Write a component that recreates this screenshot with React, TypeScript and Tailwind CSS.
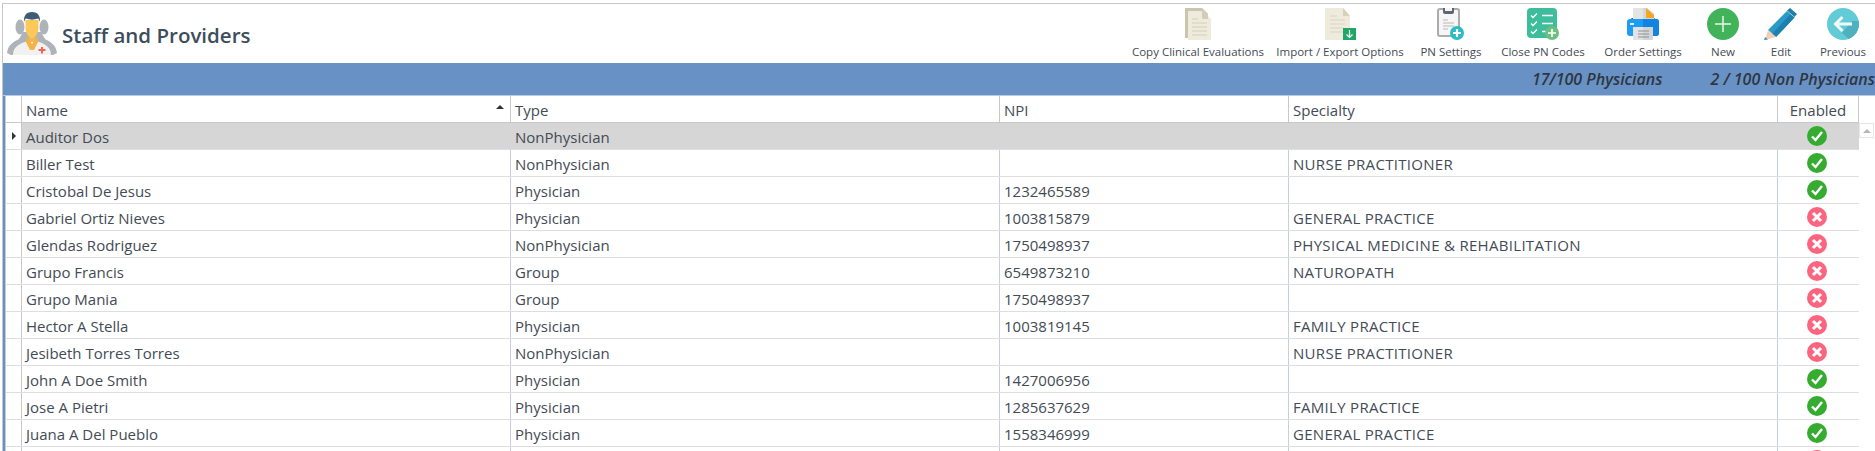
import React from "react";

const rows = [
  { name: "Auditor Dos", type: "NonPhysician", npi: "", specialty: "", enabled: true },
  { name: "Biller Test", type: "NonPhysician", npi: "", specialty: "NURSE PRACTITIONER", enabled: true },
  { name: "Cristobal De Jesus", type: "Physician", npi: "1232465589", specialty: "", enabled: true },
  { name: "Gabriel Ortiz Nieves", type: "Physician", npi: "1003815879", specialty: "GENERAL PRACTICE", enabled: false },
  { name: "Glendas Rodriguez", type: "NonPhysician", npi: "1750498937", specialty: "PHYSICAL MEDICINE & REHABILITATION", enabled: false },
  { name: "Grupo Francis", type: "Group", npi: "6549873210", specialty: "NATUROPATH", enabled: false },
  { name: "Grupo Mania", type: "Group", npi: "1750498937", specialty: "", enabled: false },
  { name: "Hector A Stella", type: "Physician", npi: "1003819145", specialty: "FAMILY PRACTICE", enabled: false },
  { name: "Jesibeth Torres Torres", type: "NonPhysician", npi: "", specialty: "NURSE PRACTITIONER", enabled: false },
  { name: "John A Doe Smith", type: "Physician", npi: "1427006956", specialty: "", enabled: true },
  { name: "Jose A Pietri", type: "Physician", npi: "1285637629", specialty: "FAMILY PRACTICE", enabled: true },
  { name: "Juana A Del Pueblo", type: "Physician", npi: "1558346999", specialty: "GENERAL PRACTICE", enabled: true },
  { name: "", type: "", npi: "", specialty: "", enabled: false },
];

const StaffLogo = () => (
  <svg width="50" height="43" viewBox="0 0 50 43">
    {/* people behind */}
    <ellipse cx="13" cy="15" rx="4.500" ry="7.500" fill="#aeb3ba" />
    <ellipse cx="37" cy="15" rx="4.500" ry="7.500" fill="#aeb3ba" />
    <path d="M0 41c1-8 6-11 12-14l4-7h18l4 7c6 3 11 6 12 14l-4 2H4z" fill="#aeb3ba" />
    {/* coat */}
    <path d="M6 43c0-7 5-11 12-13l4-2h6l4 2c7 2 12 6 12 13z" fill="#f1f1ef" />
    {/* face and neck */}
    <path d="M22 21h6v9h-6z" fill="#f6b84a" />
    <path d="M18.500 8h13v7c0 6-3 11-6.500 11s-6.500-5-6.500-11z" fill="#fdc858" />
    <path d="M25 0c6 0 8.500 4 8 10-.5-1.500-1-3-2-3.500-4 1.500-8 1.500-12 0-1 .5-1.500 2-2 3.500-.5-6 2-10 8-10z" fill="#3f5c75" />
    {/* collar and tie */}
    <path d="M20 25l5 7 5-7 1.500 4-4.500 9h-4l-4.500-9z" fill="#f3b24a" />
    {/* red cross */}
    <path d="M34 35h2v2h2.500v2H36v2.500h-2V39h-2.500v-2H34z" fill="#f0635f" />
  </svg>
);

const CopyDoc = () => (
  <svg width="26" height="32" viewBox="0 0 26 32">
    <path d="M0 0h17l6 6v24H0z" fill="#c9c5ae" />
    <path d="M3 3h15l8 8v21H3z" fill="#eeeadc" />
    <path d="M17 0l6 6v5h-5l-1-1z" fill="#d2cdb8" />
    <path d="M7 11h6M7 15h15M7 19h15M7 23h15M7 27h15" stroke="#d3cfba" strokeWidth="1.200" />
  </svg>
);

const ImportDoc = () => (
  <svg width="31" height="32" viewBox="0 0 31 32">
    <path d="M0 0h18l7 8v24H0z" fill="#eeeadc" />
    <path d="M18 0l7 8h-7z" fill="#d6d1bc" />
    <path d="M5 8h7M5 12h15M5 16h15M5 20h13M5 24h13" stroke="#d9d5c3" strokeWidth="1.200" />
    <rect x="18" y="20" width="13" height="12" fill="#1fa865" />
    <path d="M24.500 22v7.500M21.500 26.500l3 3 3-3" stroke="#fff" strokeWidth="1.200" fill="none" />
  </svg>
);

const Clipboard = () => (
  <svg width="28" height="32" viewBox="0 0 28 32">
    <rect x="1" y="1" width="21" height="27" rx="2" fill="#f6f6f6" stroke="#a9adb0" strokeWidth="2" />
    <path d="M6 0h11v4a2 2 0 0 1-2 2H8a2 2 0 0 1-2-2z" fill="#5b6670" />
    <path d="M8 0h7v3H8z" fill="#f6f6f6" />
    <path d="M6 12h5M6 15h11M6 18h11M6 21h5" stroke="#b4b8bb" strokeWidth="1" />
    <circle cx="20" cy="25" r="7" fill="#2bbcc4" />
    <path d="M20 21v8M16 25h8" stroke="#fff" strokeWidth="2.200" />
  </svg>
);

const Checklist = () => (
  <svg width="32" height="32" viewBox="0 0 32 32">
    <rect x="0" y="0" width="30" height="30" rx="4" fill="#3dbd9c" />
    <path d="M4 7.500l2 2 4-4M4 15.500l2 2 4-4M4 23.500l2 2 4-4" stroke="#fff" strokeWidth="1.300" fill="none" />
    <path d="M15 7.500h11M15 15.500h11M15 23.500h4" stroke="#fff" strokeWidth="1.300" />
    <circle cx="25" cy="25" r="7" fill="#6cc07f" />
    <path d="M25 21v8M21 25h8" stroke="#fff" strokeWidth="1.700" />
  </svg>
);

const Printer = () => (
  <svg width="32" height="32" viewBox="0 0 32 32">
    <path d="M3 13a3 3 0 0 1 3-3h20a3 3 0 0 1 3 3v2H3z" fill="#44494f" />
    <path d="M6 0h14l7 6v9H6z" fill="#e4e4e4" />
    <path d="M16 0h4l7 6v9H16z" fill="#d6d6d6" />
    <path d="M19 0l8 7v3h-8z" fill="#f5a623" />
    <path d="M3 11h26a3 3 0 0 1 3 3v11a3 3 0 0 1-3 3H3a3 3 0 0 1-3-3V14a3 3 0 0 1 3-3z" fill="#1d9cf5" />
    <path d="M16 11h13a3 3 0 0 1 3 3v11a3 3 0 0 1-3 3H16z" fill="#1283de" />
    <rect x="3" y="15" width="4" height="2" fill="#dff1fe" />
    <path d="M6 19h20v13H6z" fill="#e2e2e2" />
    <path d="M16 19h10v13H16z" fill="#d4d4d4" />
    <path d="M11 23h11M11 26h11M11 29h11" stroke="#8b9296" strokeWidth="1.200" />
  </svg>
);

const NewIcon = () => (
  <svg width="32" height="32" viewBox="0 0 32 32">
    <circle cx="16" cy="16" r="16" fill="#42b35a" />
    <path d="M16 8v16M8 16h16" stroke="#e8f6ea" strokeWidth="1.500" />
  </svg>
);

const Pencil = () => (
  <svg width="34" height="32" viewBox="0 0 34 32">
    <path d="M26 0l7 6-2.500 3-7.500-6.500z" fill="#1f7fa8" />
    <path d="M23 3l7.500 6.500L12 29l-8-7z" fill="#2a9ac8" />
    <path d="M26 6.500l4.500 3L12 29l-3.500-3.500z" fill="#1f80ad" />
    <path d="M4 22l8 7-11 3z" fill="#f5cdb6" />
    <path d="M1 29l3 2.500-4 .5z" fill="#2a95c4" />
  </svg>
);

const PrevIcon = () => (
  <svg width="32" height="32" viewBox="0 0 32 32">
    <defs>
      <clipPath id="prev-clip">
        <circle cx="16" cy="16" r="16" />
      </clipPath>
    </defs>
    <circle cx="16" cy="16" r="16" fill="#62cbd6" />
    <path d="M15 25L25 13h9v20H24z" fill="#4fb1bf" clipPath="url(#prev-clip)" />
    <path d="M15.500 9l-7 7 7 7M9 16h16" stroke="#f2fbfb" strokeWidth="3" fill="none" />
  </svg>
);

const tools = [
  { label: "Copy Clinical Evaluations", icon: <CopyDoc />, cls: "w-[142px]" },
  { label: "Import / Export Options", icon: <ImportDoc />, cls: "w-[142px]" },
  { label: "PN Settings", icon: <Clipboard />, cls: "w-[80px]" },
  { label: "Close PN Codes", icon: <Checklist />, cls: "w-[104px]" },
  { label: "Order Settings", icon: <Printer />, cls: "w-[96px]" },
  { label: "New", icon: <NewIcon />, cls: "w-[64px]" },
  { label: "Edit", icon: <Pencil />, cls: "w-[52px]" },
  { label: "Previous", icon: <PrevIcon />, cls: "w-[64px] ml-[4px]" },
];

const StatusIcon = ({ on }: { on: boolean }) =>
  on ? (
    <svg width="20" height="20" viewBox="0 0 20 20">
      <circle cx="10" cy="10" r="10" fill="#35ac2f" />
      <path d="M5 10.500l3.500 3.500 6.500-8" stroke="#fff" strokeWidth="2.400" fill="none" />
    </svg>
  ) : (
    <svg width="20" height="20" viewBox="0 0 20 20">
      <circle cx="10" cy="10" r="10" fill="#fb6580" />
      <path d="M6 6l8 8M14 6l-8 8" stroke="#fff" strokeWidth="3" />
    </svg>
  );

const cols = "grid grid-cols-[489px_489px_289px_489px_81px]";

export default function App() {
  return (
    <div className="h-[451px] overflow-hidden bg-white pl-[2px] pt-[3px] text-[#434b55] font-['Open_Sans','Liberation_Sans',sans-serif]">
      <div className="h-[448px] border-l border-t border-[#c6c6c6] flex flex-col">
        {/* Header */}
        <div className="h-[59px] flex justify-between items-start">
          <div className="flex items-center pl-[4px] pt-[8px]">
            <StaffLogo />
            <h1 className="ml-[5px] mt-[3px] text-[20.500px] font-semibold text-[#3d4d5c]">Staff and Providers</h1>
          </div>
          <div className="flex pt-[4px]">
            {tools.map((t) => (
              <div key={t.label} className={`${t.cls} flex flex-col items-center`}>
                <div className="h-[32px] flex items-center justify-center">{t.icon}</div>
                <span className="mt-[4px] text-[11.500px] leading-[16px] whitespace-nowrap">{t.label}</span>
              </div>
            ))}
          </div>
        </div>

        {/* Counter bar */}
        <div className="h-[33px] bg-[#6892c6] border-b border-[#b9cbe3] flex justify-end items-center text-[16px] font-semibold italic text-[#2e3640] whitespace-nowrap">
          <span className="mr-[48px]">17/100 Physicians</span>
          <span>2 / 100 Non Physicians</span>
        </div>

        {/* Grid */}
        <div className="flex-1 pl-[2px] bg-[#6892c6] overflow-hidden">
          <div className="h-full bg-white border-l border-[#c6cdd6] flex">
            <div className="w-[1853px] text-[15px]">
              <div className="flex h-[27px] border-b border-[#c8c8c8]">
                <div className="w-[16px] border-r border-[#c8c8c8]" />
                <div className={`${cols} flex-1 leading-[26px]`}>
                  <div className="relative pl-[4px] pt-[1px] border-r border-[#c8c8c8]">
                    Name
                    <span className="absolute right-[6px] top-[9px] w-0 h-0 border-x-[4px] border-x-transparent border-b-[4px] border-b-[#333]" />
                  </div>
                  <div className="pl-[4px] pt-[1px] border-r border-[#c8c8c8]">Type</div>
                  <div className="pl-[4px] pt-[1px] border-r border-[#c8c8c8]">NPI</div>
                  <div className="pl-[4px] pt-[1px] border-r border-[#c8c8c8]">Specialty</div>
                  <div className="text-center pt-[1px] border-r border-[#c8c8c8]">Enabled</div>
                </div>
              </div>
              {rows.map((r, i) => (
                <div key={i} className={`flex h-[27px] border-b border-[#dcdee2] ${i === 0 ? "bg-[#d6d6d6]" : ""}`}>
                  <div className="w-[16px] border-r border-[#c8c8c8] bg-white flex items-center justify-center">
                    {i === 0 && <span className="w-0 h-0 border-y-[4px] border-y-transparent border-l-[4px] border-l-[#333]" />}
                  </div>
                  <div className={`${cols} flex-1 leading-[24px]`}>
                    <div className={`pl-[4px] pt-[2px] border-r ${i === 0 ? "border-transparent" : "border-[#c6cfda]"}`}>{r.name}</div>
                    <div className={`pl-[4px] pt-[2px] border-r ${i === 0 ? "border-transparent" : "border-[#c6cfda]"}`}>{r.type}</div>
                    <div className={`pl-[4px] pt-[2px] border-r ${i === 0 ? "border-transparent" : "border-[#c6cfda]"}`}>{r.npi}</div>
                    <div className={`pl-[4px] pt-[2px] tracking-[0.3px] border-r ${i === 0 ? "border-transparent" : "border-[#c6cfda]"}`}>{r.specialty}</div>
                    <div className="flex items-center justify-center pr-[3px]"><StatusIcon on={r.enabled} /></div>
                  </div>
                </div>
              ))}
            </div>
            <div className="flex-1 pt-[27px]">
              <div className="w-[15px] h-[15px] border border-[#e6e6e6] flex items-center justify-center">
                <span className="w-0 h-0 border-x-[4px] border-x-transparent border-b-[4px] border-b-[#b5b5b5]" />
              </div>
            </div>
          </div>
        </div>
      </div>
    </div>
  );
}
